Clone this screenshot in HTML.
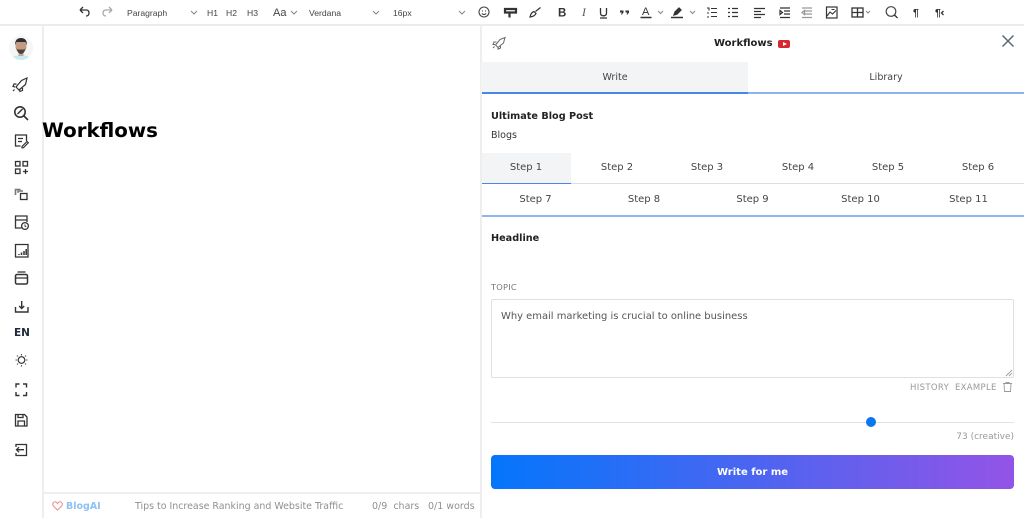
<!DOCTYPE html>
<html lang="en"><head><meta charset="utf-8"><title>Workflows</title>
<style>
*{box-sizing:border-box}
html{margin:0;padding:0;width:1024px;height:518px;overflow:hidden;background:#fff}
body{margin:0;padding:0;width:1024px;height:518px;overflow:hidden;background:#fff;position:relative;font-family:"DejaVu Sans",Verdana,sans-serif;color:#333;filter:blur(.3px)}
.a{position:absolute;white-space:nowrap}
.t{font-family:"Liberation Sans",sans-serif;font-size:8.6px;color:#444;top:6.500px;line-height:12px}
.s{font-size:10px;color:#444;line-height:14px;transform:translateX(-50%)}
svg{position:absolute;overflow:visible;fill:none;stroke:#333;stroke-width:1.3}
</style></head><body>
<!-- structure -->
<div class="a" style="left:0;top:24px;width:1024px;height:2px;background:#ececec"></div>
<div class="a" style="left:42px;top:25px;width:2px;height:493px;background:#eeeeee"></div>
<div class="a" style="left:480px;top:25px;width:2px;height:493px;background:#eeeeee"></div>
<div class="a" style="left:44px;top:492px;width:436px;height:2px;background:#eeeeee"></div>

<!-- toolbar text -->
<div class="a t" style="left:127px">Paragraph</div>
<div class="a t" style="left:207px">H1</div>
<div class="a t" style="left:226px">H2</div>
<div class="a t" style="left:247px">H3</div>
<div class="a t" style="left:273px;font-size:11px">Aa</div>
<div class="a t" style="left:309px">Verdana</div>
<div class="a t" style="left:393px">16px</div>

<!-- toolbar icons -->
<svg style="left:0;top:0" width="1024" height="24" viewBox="0 0 1024 24">
<path d="M80 10l3-3M80 10l3 3M80 10h6q3 0 3 3t-3 3" stroke="#333"/>
<path d="M112 10l-3-3M112 10l-3 3M112 10h-6q-3 0-3 3t3 3" stroke="#aaa"/>
<g stroke="#888" stroke-width="1"><path d="M191 11l3 3 3-3M291 11l3 3 3-3M373 11l3 3 3-3M459 11l3 3 3-3M658 11l2.500 2.500 2.500-2.500M690 11l2.500 2.500 2.500-2.500M866 11l2 2 2-2"/></g>
<circle cx="484" cy="12" r="5" stroke="#444" stroke-width="1.100"/><path d="M482 11h1M485 11h1M481.800 13.500q2.200 2 4.400 0" stroke-width="1"/>
<path d="M505 9h11v3.500h-11zM509.500 12.500v5" stroke-width="2.200"/>
<path d="M530 17q1-4.500 4-5.500l2 2q-1.500 3-6 3.500zM535.500 11.500l5-4" stroke-width="1.200"/>
<text x="558" y="16.500" font-family="Liberation Sans" font-weight="700" font-size="11.500" fill="#333" stroke="none">B</text>
<text x="582" y="16" font-family="Liberation Serif" font-style="italic" font-size="11.500" fill="#555" stroke="none">I</text>
<path d="M600.500 8v5q0 2.800 3 2.800t3-2.800V8M600 18h7"/>
<path d="M620 10.500h3.500v2l-1.500 2h-1l.8-2h-1.800zM625.500 10.500h3.500v2l-1.500 2h-1l.8-2h-1.800z" fill="#333" stroke="none"/>
<text x="642" y="15" font-family="Liberation Sans" font-size="11" fill="#333" stroke="none">A</text>
<path d="M640.500 17.500h11" stroke-width="1.500"/>
<path d="M671 17.500h12" stroke-width="1.500"/><path d="M674 15l1-3 4-4 2 2-4 4z" fill="#333"/>
<path d="M707 8h2v2.500M707 13h2M707 17h2M711 8.500h6M711 12.500h6M711 16.500h6" stroke-width="1.100"/>
<path d="M728 8.500h2M728 12.500h2M728 16.500h2M732 8.500h6M732 12.500h6M732 16.500h6" stroke-width="1.300"/>
<path d="M754 8.500h11M754 11.500h7M754 14.500h11M754 17.500h7" stroke-width="1.200"/>
<path d="M780 8h10M784 11h6M784 14h6M780 17.500h10M780 10.500l2.500 2-2.500 2z" stroke-width="1.200"/>
<path d="M802 8h10M805 11h7M805 14h7M802 17.500h10M804.500 10.500l-2.500 2 2.500 2z" stroke="#999" stroke-width="1.200"/>
<rect x="826.500" y="7" width="10.500" height="11" stroke-width="1.200"/><path d="M827 16l3-4 2.500 2 3.500-3.500M831.500 9.500h3" stroke-width="1.100"/>
<rect x="852" y="8" width="11" height="9"/><path d="M852 12.500h11M857.500 8v9"/>
<circle cx="891" cy="11.500" r="4.800" stroke-width="1.200" stroke="#444"/><path d="M894.500 15l3 3" stroke-width="1.300"/>
<text x="913" y="16" font-family="Liberation Sans" font-weight="700" font-size="10.500" fill="#333" stroke="none">¶</text>
<text x="935" y="16" font-family="Liberation Sans" font-weight="700" font-size="10.500" fill="#333" stroke="none">¶</text>
<path d="M943.500 11l-2 2 2 2"/>
</svg>

<!-- left rail -->
<svg style="left:9px;top:34px" width="26" height="28" viewBox="0 0 26 28">
<defs><clipPath id="k"><circle cx="12" cy="14" r="12"/></clipPath></defs>
<g clip-path="url(#k)" stroke="none">
<rect width="26" height="28" fill="#f5f6f5"/>
<path d="M0 26q4-5 12-5t12 5v4H0z" fill="#c6ebf2"/>
<rect x="9.500" y="15" width="5" height="7" fill="#cba58e"/>
<ellipse cx="12" cy="12" rx="5.500" ry="7" fill="#c49a80"/>
<path d="M6 11q0-7 6-7t6 7l-1.500-3h-9z" fill="#2a3034"/>
<path d="M7.500 14q1 6 4.500 6t4.500-6l-1 1.500h-7z" fill="#4a4440"/>
</g></svg>
<svg style="left:0;top:70px" width="44" height="400" viewBox="0 70 44 400">
<path d="M27 78l-1.500 6.500-6.500 5.500-3-3 5.500-6.500zM16.500 84l-2.500 0-1 2.500 2 .5M22.500 88l0 2.500-2.500 1-.5-2M14.500 89.500l-1.500 1.500" stroke-width="1.200"/>
<circle cx="20" cy="112" r="5.200" stroke-width="1.600"/><path d="M24 116l4 4" stroke-width="1.600"/><path d="M17.500 114l5-5" stroke-width="1.400"/>
<path d="M26.500 141v-6H15.500v11h5M18 138.500h5M18 141.500h4" stroke-width="1.300"/><path d="M22 146.500l5-5 1.300 1.300-5 5h-1.300z" stroke-width="1.200"/>
<rect x="15.500" y="161.500" width="4.500" height="4.500" stroke-width="1.300"/><rect x="23" y="161.500" width="4.500" height="4.500" stroke-width="1.300"/><rect x="15.500" y="169" width="4.500" height="4.500" stroke-width="1.300"/><path d="M25.500 169v5M23 171.500h5" stroke-width="1.300"/>
<path d="M15.500 195v-5.500h5" stroke="#777" stroke-width="1.600"/><path d="M18 193v-2h5" stroke="#777" stroke-width="1.400"/><rect x="20.500" y="193.500" width="6.500" height="6"/>
<path d="M27 222v-6H15.500v12h6M15.500 220h11" stroke-width="1.300"/><circle cx="25" cy="226" r="3.400" stroke-width="1.300"/><path d="M25 224.500V226l1.200.8" stroke-width="1"/>
<path d="M15.500 257v-12.500h12.500v12.500z" stroke-width="1.300"/><path d="M19 255v-1M21.500 255v-2.500M24 255v-4M26.200 255v-6" stroke-width="1.500"/>
<rect x="15.500" y="274.500" width="12" height="9.500" rx="1.500" stroke-width="1.500"/><path d="M15.500 278h12M17.500 272h8" stroke-width="1.300"/>
<path d="M15.500 307v5h12.500v-5" stroke-width="1.400"/><path d="M21.700 301v7M19.200 306l2.500 2.500 2.500-2.500" stroke-width="1.400"/>
<circle cx="21.500" cy="360" r="3.300" stroke-width="1.200"/><path d="M21.500 354v1.500M21.500 365v1.500M15.500 360h1.500M26 360h1.500M17 355.500l1 1M25 363.500l1 1M17 364.500l1-1M25 356.500l1-1" stroke-width="1.100" stroke="#555"/>
<path d="M16 387.500v-3.500h3.500M23 384h3.500v3.500M16 392v3.500h3.500M23 395.500h3.500V392" stroke-width="1.400"/>
<path d="M15.500 414.500h9l2.500 2.500v9h-11.500zM18 414.500v3h5v-3M18 426v-5h6.500v5" stroke-width="1.300"/>
<path d="M16 447v-2.500h10.500v11H16V453" stroke-width="1.300"/><path d="M24 449.700h-7.500M19 447.200l-2.500 2.500 2.500 2.500" stroke-width="1.300"/>
</svg>
<div class="a" style="left:14px;top:326px;font-size:10.500px;font-weight:700;color:#1d2b3a;line-height:14px">EN</div>

<!-- editor -->
<div class="a" style="left:42px;top:117px;font-size:19.800px;font-weight:700;color:#000;line-height:27px">Workflows</div>

<!-- footer -->
<svg style="left:51.500px;top:500.500px" width="11" height="10" viewBox="0 0 12 11"><path d="M6 10L1.500 5.500Q0 3.500 1.500 1.800T5 1.500L6 3l1-1.500q2-1.500 3.500.3t0 3.700z" stroke="#e98c8c" stroke-width="1.100"/></svg>
<div class="a" style="left:66px;top:500px;font-size:9.500px;font-weight:700;color:#8cc2f5;line-height:13px">BlogAI</div>
<div class="a" style="left:135px;top:500px;font-size:9.450px;color:#8f8f8f;line-height:13px">Tips to Increase Ranking and Website Traffic</div>
<div class="a" style="left:372px;top:500px;font-size:9.500px;color:#8f8f8f;line-height:13px">0/9&nbsp; chars</div>
<div class="a" style="left:428px;top:500px;font-size:9.500px;color:#8f8f8f;line-height:13px">0/1 words</div>

<!-- panel header -->
<svg style="left:492px;top:37px" width="14" height="13" viewBox="0 0 14 13"><path d="M13 0.500l-1.500 5.500-5.500 4.500-2.500-2.500 4.500-5.500zM4.500 5L2 5 1 7.500l2 0M8.500 9l0 2-2.500 1.200 0-1.700M2.500 9.500L1 11" stroke="#666" stroke-width="1"/></svg>
<div class="a" style="left:714px;top:37px;font-size:10px;font-weight:700;color:#222;line-height:13px">Workflows</div>
<div class="a" style="left:778px;top:39.500px;width:12px;height:8px;border-radius:2px;background:#d8282f"></div>
<div class="a" style="left:782.500px;top:41.500px;width:0;height:0;border-left:4px solid #fff;border-top:2px solid transparent;border-bottom:2px solid transparent"></div>
<svg style="left:1002px;top:35px" width="12" height="12" viewBox="0 0 12 12"><path d="M.5.500l11 11M11.500.500l-11 11" stroke="#5b6670" stroke-width="1.500"/></svg>

<!-- tabs -->
<div class="a" style="left:481px;top:62px;width:267px;height:31px;background:#f3f4f6"></div>
<div class="a" style="left:482px;top:92px;width:542px;height:2px;background:#8db2f2"></div>
<div class="a" style="left:482px;top:92px;width:266px;height:2px;background:#4a86ea"></div>
<div class="a s" style="left:615px;top:71px;font-size:9.500px">Write</div>
<div class="a s" style="left:886px;top:71px;font-size:9.500px">Library</div>

<div class="a" style="left:491px;top:109.500px;font-size:9.700px;font-weight:700;color:#222;line-height:13px">Ultimate Blog Post</div>
<div class="a" style="left:491px;top:128.500px;font-size:9.500px;color:#333;line-height:13px">Blogs</div>

<!-- steps -->
<div class="a" style="left:482px;top:153px;width:89px;height:30px;background:#f3f4f6"></div>
<div class="a" style="left:482px;top:183px;width:542px;height:1px;background:#dddddd"></div>
<div class="a" style="left:482px;top:183px;width:89px;height:1px;background:#4a86ea"></div>
<div class="a" style="left:482px;top:215px;width:542px;height:2px;background:#8fb4ee"></div>
<div class="a s" style="left:526px;top:161px">Step 1</div>
<div class="a s" style="left:617px;top:161px">Step 2</div>
<div class="a s" style="left:707px;top:161px">Step 3</div>
<div class="a s" style="left:798px;top:161px">Step 4</div>
<div class="a s" style="left:888px;top:161px">Step 5</div>
<div class="a s" style="left:978px;top:161px">Step 6</div>
<div class="a s" style="left:535.500px;top:192.500px">Step 7</div>
<div class="a s" style="left:644px;top:192.500px">Step 8</div>
<div class="a s" style="left:752.500px;top:192.500px">Step 9</div>
<div class="a s" style="left:860.500px;top:192.500px">Step 10</div>
<div class="a s" style="left:968.500px;top:192.500px">Step 11</div>

<div class="a" style="left:491px;top:232px;font-size:9.700px;font-weight:700;color:#222;line-height:13px">Headline</div>
<div class="a" style="left:491px;top:281px;font-size:8.300px;color:#777;line-height:12px;letter-spacing:.2px">TOPIC</div>

<!-- textarea -->
<div class="a" style="left:491px;top:299px;width:523px;height:79px;border:1px solid #e0e0e0;border-radius:2px"></div>
<div class="a" style="left:501px;top:310px;font-size:9.950px;color:#555;line-height:14px">Why email marketing is crucial to online business</div>
<svg style="left:1005px;top:369px" width="8" height="8" viewBox="0 0 8 8"><path d="M1 7l6-6M4 7l3-3" stroke="#888" stroke-width=".8"/></svg>
<div class="a" style="left:910px;top:382px;font-size:8.500px;color:#999;line-height:12px;letter-spacing:.35px">HISTORY</div>
<div class="a" style="left:955px;top:382px;font-size:8.500px;color:#999;line-height:12px;letter-spacing:.3px">EXAMPLE</div>
<svg style="left:1003px;top:382px" width="9" height="10" viewBox="0 0 9 10"><path d="M0 1.500h9M3 1.500V.500h3v1M1 1.500l.500 8h6l.500-8" stroke="#999" stroke-width=".9"/></svg>

<!-- slider -->
<div class="a" style="left:491px;top:422px;width:523px;height:1px;background:#e3e3e3"></div>
<div class="a" style="left:866px;top:417px;width:10px;height:10px;border-radius:50%;background:#0a76f0"></div>
<div class="a" style="right:10px;top:431px;font-size:9px;color:#999;line-height:13px">73 (creative)</div>

<!-- button -->
<div class="a" style="left:491px;top:455px;width:523px;height:34px;border-radius:4px;background:linear-gradient(90deg,#0476fb,#9354e6)"></div>
<div class="a" style="left:752.500px;top:465.500px;font-size:10px;font-weight:700;color:#fff;line-height:13px;transform:translateX(-50%)">Write for me</div>
</body></html>
